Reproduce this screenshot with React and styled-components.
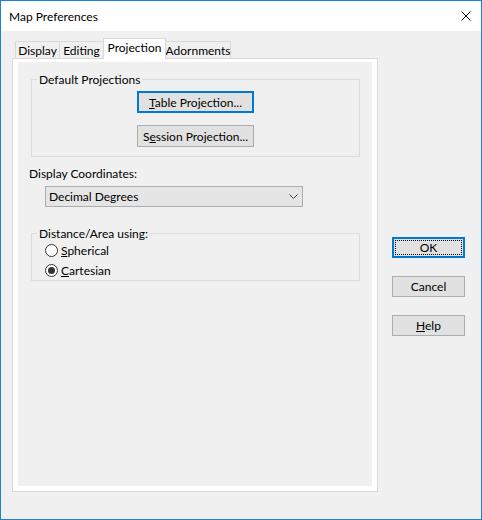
import styled, { createGlobalStyle } from "styled-components";
import { useState } from "react";

const GlobalStyle = createGlobalStyle`
  body {
    margin: 0;
    background: #ffffff;
    font-family: Lato, "Liberation Sans", sans-serif;
    font-size: 12px;
    color: #000;
  }
`;

const Window = styled.div`
  width: 482px;
  height: 520px;
  box-sizing: border-box;
  border: 1px solid #1883d7;
  display: flex;
  flex-direction: column;
  background: #f0f0f0;
`;

const TitleBar = styled.div`
  height: 30px;
  flex-shrink: 0;
  background: #ffffff;
  display: flex;
  align-items: center;
  justify-content: space-between;
  padding: 0 10px 0 8px;
`;

const Title = styled.span`
  line-height: 15px;
`;

const Body = styled.div`
  flex: 1;
  display: flex;
  align-items: flex-start;
`;

const LeftCol = styled.div`
  display: flex;
  flex-direction: column;
  width: 366px;
  margin: 7px 0 0 11px;
`;

const TabStrip = styled.div`
  display: flex;
  align-items: flex-end;
  height: 20px;
  padding-left: 3px;
  position: relative;
  z-index: 1;
`;

const Tab = styled.div`
  box-sizing: border-box;
  width: ${(p) => p.$w}px;
  height: ${(p) => (p.$active ? 21 : 17)}px;
  margin-bottom: ${(p) => (p.$active ? -1 : 0)}px;
  border: 1px solid #d9d9d9;
  border-bottom: none;
  background: ${(p) => (p.$active ? "#ffffff" : "#f0f0f0")};
  display: flex;
  align-items: center;
  justify-content: center;
  padding-bottom: ${(p) => (p.$active ? 3 : 0)}px;
  position: relative;
  z-index: ${(p) => (p.$active ? 2 : 1)};
  cursor: default;

  & + & {
    margin-left: -1px;
  }
`;

const Panel = styled.div`
  box-sizing: border-box;
  height: 434px;
  border: 1px solid #d9d9d9;
  background: #ffffff;
  padding: 3px 5px 5px 5px;
  display: flex;
`;

const Page = styled.div`
  flex: 1;
  background: #f0f0f0;
  display: flex;
  flex-direction: column;
`;

const Group = styled.fieldset`
  margin: ${(p) => p.$top}px 12px 0 13px;
  padding: 0 0 ${(p) => p.$bottom}px 0;
  border: 1px solid #dcdcdc;
  min-width: 0;
`;

const Legend = styled.legend`
  margin-left: 5px;
  padding: 0 2px;
  line-height: 15px;
`;

const ButtonStack = styled.div`
  display: flex;
  flex-direction: column;
  align-items: center;
  gap: 12px;
  margin-top: 4px;
`;

const PushButton = styled.button`
  box-sizing: border-box;
  width: ${(p) => p.$w}px;
  height: ${(p) => p.$h}px;
  padding: 0;
  border: ${(p) => (p.$focused ? "2px solid #0078d7" : "1px solid #adadad")};
  background: #e1e1e1;
  font: inherit;
  color: #000;
  outline: ${(p) => (p.$dotted ? "1px dotted #000" : "none")};
  outline-offset: -4px;
`;

const Key = styled.span`
  text-decoration: underline;
`;

const FieldLabel = styled.div`
  margin: 9px 0 0 11px;
  line-height: 15px;
`;

const Combo = styled.div`
  box-sizing: border-box;
  width: 258px;
  height: 21px;
  margin: 5px 0 0 27px;
  border: 1px solid #adadad;
  background: #e5e5e5;
  display: flex;
  align-items: center;
  justify-content: space-between;
  padding: 0 4px 0 3px;
`;

const RadioList = styled.div`
  display: flex;
  flex-direction: column;
  gap: 3px;
  padding-left: 13px;
  margin-top: 1px;
`;

const RadioRow = styled.label`
  display: flex;
  align-items: center;
  gap: 3px;
  height: 17px;
`;

const RadioMark = styled.span`
  box-sizing: border-box;
  width: 13px;
  height: 13px;
  border-radius: 50%;
  border: 1px solid #333;
  background: #fff;
  display: flex;
  align-items: center;
  justify-content: center;

  &::after {
    content: "";
    width: 7px;
    height: 7px;
    border-radius: 50%;
    background: ${(p) => (p.$checked ? "#333" : "transparent")};
  }
`;

const RightCol = styled.div`
  display: flex;
  flex-direction: column;
  gap: 18px;
  margin: 206px 0 0 14px;
`;

const tabs = [
  { label: "Display", w: 45 },
  { label: "Editing", w: 45 },
  { label: "Projection", w: 63 },
  { label: "Adornments", w: 66 },
];

export default function App() {
  const [mode, setMode] = useState("cartesian");

  return (
    <>
      <GlobalStyle />
      <Window>
        <TitleBar>
          <Title>Map Preferences</Title>
          <svg width="10" height="10" viewBox="0 0 10 10">
            <path d="M0.5 0.5 L9.5 9.5 M9.5 0.5 L0.5 9.5" stroke="#000" strokeWidth="1" />
          </svg>
        </TitleBar>
        <Body>
          <LeftCol>
            <TabStrip>
              {tabs.map((t) => (
                <Tab key={t.label} $w={t.w} $active={t.label === "Projection"}>
                  {t.label}
                </Tab>
              ))}
            </TabStrip>
            <Panel>
              <Page>
                <Group $top={10} $bottom={9}>
                  <Legend>Default Projections</Legend>
                  <ButtonStack>
                    <PushButton $w={117} $h={22} $focused>
                      <Key>T</Key>able Projection...
                    </PushButton>
                    <PushButton $w={117} $h={22}>
                      S<Key>e</Key>ssion Projection...
                    </PushButton>
                  </ButtonStack>
                </Group>

                <FieldLabel>Display Coordinates:</FieldLabel>
                <Combo>
                  <span>Decimal Degrees</span>
                  <svg width="9" height="5" viewBox="0 0 9 5">
                    <polyline points="0.5,0.5 4.5,4.5 8.5,0.5" fill="none" stroke="#404040" strokeWidth="1" />
                  </svg>
                </Combo>

                <Group $top={19} $bottom={1}>
                  <Legend>Distance/Area using:</Legend>
                  <RadioList>
                    <RadioRow onClick={() => setMode("spherical")}>
                      <RadioMark $checked={mode === "spherical"} />
                      <span>
                        <Key>S</Key>pherical
                      </span>
                    </RadioRow>
                    <RadioRow onClick={() => setMode("cartesian")}>
                      <RadioMark $checked={mode === "cartesian"} />
                      <span>
                        <Key>C</Key>artesian
                      </span>
                    </RadioRow>
                  </RadioList>
                </Group>
              </Page>
            </Panel>
          </LeftCol>
          <RightCol>
            <PushButton $w={73} $h={21} $focused $dotted>
              OK
            </PushButton>
            <PushButton $w={73} $h={21}>
              Cancel
            </PushButton>
            <PushButton $w={73} $h={21}>
              <Key>H</Key>elp
            </PushButton>
          </RightCol>
        </Body>
      </Window>
    </>
  );
}
